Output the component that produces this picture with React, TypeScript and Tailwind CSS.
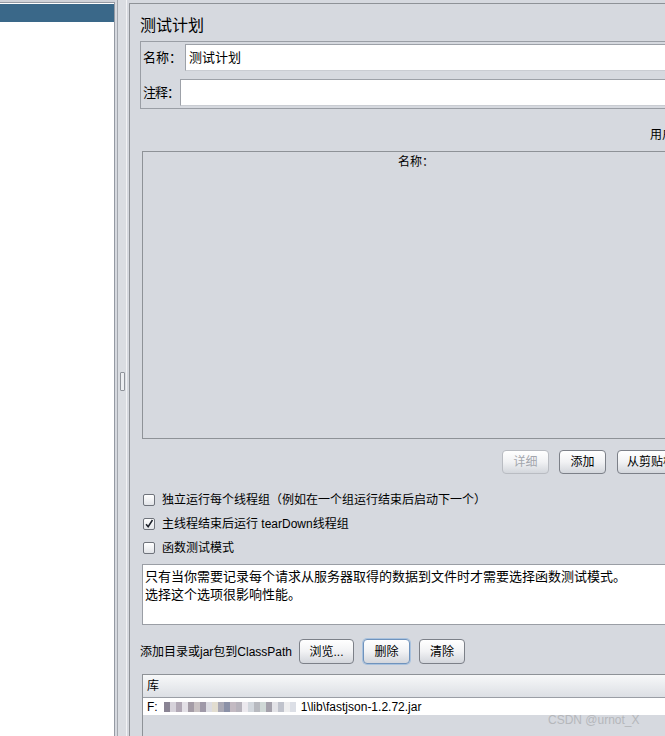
import React from "react";

const FONT = "font-['Liberation_Sans','Noto_Sans_CJK_SC',sans-serif]";

function Btn({
  children,
  w,
  disabled,
  focused,
  h = "h-[24px]",
}: {
  children: React.ReactNode;
  w: string;
  disabled?: boolean;
  focused?: boolean;
  h?: string;
}) {
  const border = disabled
    ? "border-[#b9bcc2] text-[#a3a6ad]"
    : focused
    ? "border-[#6f93bd] text-black shadow-[0_0_0_1px_#a9c2de]"
    : "border-[#7c8088] text-black";
  return (
    <div
      className={`${w} ${h} shrink-0 flex items-center justify-center rounded-[4px] border ${border} bg-linear-to-b from-[#ffffff] via-[#f1f2f4] to-[#d3d6dc] text-[12px] leading-[14px] whitespace-nowrap`}
    >
      {children}
    </div>
  );
}

function Check({ checked, label }: { checked?: boolean; label: React.ReactNode }) {
  return (
    <div className="h-[24px] flex items-center pl-[3px]">
      <div className="w-[12px] h-[12px] shrink-0 rounded-[2px] border border-[#6f737b] bg-linear-to-b from-[#ffffff] to-[#e2e4e8] flex items-center justify-center">
        {checked && (
          <svg width="12" height="12" viewBox="0 0 12 12" className="-mt-[1px]">
            <path d="M2.5 6.2 L5 9.3 L10.2 1.2" fill="none" stroke="#1b1f28" strokeWidth="1.8" />
          </svg>
        )}
      </div>
      <span className="ml-[7px] text-[12px] leading-[14px] whitespace-nowrap">{label}</span>
    </div>
  );
}

const MOSAIC = [
  "#8a8494", "#d6d2da", "#b1a8b5", "#e3e0e6", "#a49ca6", "#c9c2c3", "#9f99a8", "#dcdce2",
  "#e2ddd0", "#aaa9b5", "#8b91a7", "#c3bac2", "#b7b3bc", "#ece9ee", "#d2d7dd", "#b7b9bf",
  "#cfd8d6", "#a4a1ab", "#e3e3e7", "#c0c3cc", "#eeeeef", "#dcdfe6",
];

export default function App() {
  return (
    <div className={`w-[665px] h-[736px] overflow-hidden flex bg-[#d6d9df] text-black relative ${FONT}`}>
      {/* left tree panel */}
      <div className="w-[115px] shrink-0 pt-[2px] flex flex-col bg-[#cfd2d8]">
        <div className="flex-1 bg-white border-t border-r border-[#959aa3]">
          <div className="h-[18px] mt-[1px] bg-[#3a6889]" />
        </div>
      </div>

      {/* split divider */}
      <div className="w-[14px] shrink-0 flex">
        <div className="w-[2px]" />
        <div className="w-[1px] bg-[#a3a7ae]" />
        <div className="flex-1 bg-[#dadde2] flex flex-col items-center pt-[372px]">
          <div className="w-[5px] h-[19px] border border-[#8f939a] rounded-[1px] bg-[#eceef1]" />
        </div>
        <div className="w-[1px] bg-[#f2f3f5]" />
        <div className="w-[2px]" />
      </div>

      {/* right panel */}
      <div className="flex-1 mt-[3px] border-l border-t border-[#8e9297] overflow-hidden">
        <div className="w-[640px] pl-[10px]">
          {/* title */}
          <div className="h-[37px] pt-[13px] text-[16px] leading-[18px]">测试计划</div>

          {/* name / comment box */}
          <div className="h-[68px] border border-[#9a9ea5] pt-[2px] pl-[2px] flex flex-col">
            <div className="flex h-[27px] items-center">
              <div className="w-[42px] shrink-0 whitespace-nowrap text-[13px] leading-[15px]">名称：</div>
              <div className="flex-1 h-[27px] bg-white border-t border-l border-[#9da1a8] border-b border-b-[#c9ccd2] flex items-center pl-[3px] text-[13px] leading-[15px] text-black">
                测试计划
              </div>
            </div>
            <div className="flex h-[27px] items-center mt-[8px]">
              <div className="w-[37px] shrink-0 whitespace-nowrap text-[13px] leading-[15px] tracking-[-1px]">注释：</div>
              <div className="flex-1 h-[27px] bg-white border-t border-l border-[#9da1a8] border-b border-b-[#c9ccd2]" />
            </div>
          </div>

          {/* user defined variables label */}
          <div className="h-[42px] pt-[19px] pl-[510px] text-[12px] leading-[14px] whitespace-nowrap">
            用户定义的变量
          </div>

          {/* variables table */}
          <div className="ml-[2px] h-[288px] border-t border-l border-b border-[#8e9297]">
            <div className="w-[546px] pt-[3px] text-center text-[12px] leading-[14px]">名称：</div>
          </div>

          {/* table buttons */}
          <div className="mt-[11px] pl-[362px] flex gap-[10px]">
            <Btn w="w-[47px]" disabled>
              详细
            </Btn>
            <Btn w="w-[47px]">添加</Btn>
            <div className="ml-[1px]">
              <Btn w="w-[92px]">从剪贴板添加</Btn>
            </div>
          </div>

          {/* checkboxes */}
          <div className="mt-[14px] flex flex-col">
            <Check label="独立运行每个线程组（例如在一个组运行结束后启动下一个）" />
            <Check checked label="主线程结束后运行 tearDown线程组" />
            <Check label="函数测试模式" />
          </div>

          {/* description */}
          <div className="mt-[4px] ml-[2px] h-[61px] bg-white border border-[#9a9ea5] pt-[3px] pl-[2px] text-[13px] leading-[18px]">
            <div>只有当你需要记录每个请求从服务器取得的数据到文件时才需要选择函数测试模式。</div>
            <div>选择这个选项很影响性能。</div>
          </div>

          {/* classpath row */}
          <div className="mt-[14px] flex items-center">
            <div className="w-[159px] shrink-0 text-[12px] leading-[14px] whitespace-nowrap">
              添加目录或jar包到ClassPath
            </div>
            <div className="flex gap-[9px]">
              <Btn w="w-[55px]" h="h-[25px]">
                浏览...
              </Btn>
              <Btn w="w-[47px]" h="h-[25px]" focused>
                删除
              </Btn>
              <Btn w="w-[46px]" h="h-[25px]">
                清除
              </Btn>
            </div>
          </div>

          {/* library table */}
          <div className="mt-[10px] ml-[2px] h-[80px] border-t border-l border-[#8e9297] flex flex-col">
            <div className="h-[23px] shrink-0 border-b border-[#9a9ea5] bg-linear-to-b from-[#f7f8f9] to-[#dcdfe4] flex items-center pl-[4px] text-[12px] leading-[14px]">
              库
            </div>
            <div className="h-[17px] shrink-0 bg-white flex items-center pl-[4px] text-[12px] leading-[14px] whitespace-nowrap">
              <span>F:</span>
              <div className="ml-[6px] flex h-[10px]">
                {MOSAIC.map((c, i) => (
                  <div key={i} className="w-[6px] h-[10px]" style={{ backgroundColor: c }} />
                ))}
              </div>
              <span className="ml-[5px]">1\lib\fastjson-1.2.72.jar</span>
            </div>
          </div>
        </div>
      </div>

      {/* watermark */}
      <div className="absolute left-[548px] top-[713px] text-[12px] leading-[14px] text-[#b5b7bb] whitespace-nowrap">
        CSDN @urnot_X
      </div>
    </div>
  );
}
